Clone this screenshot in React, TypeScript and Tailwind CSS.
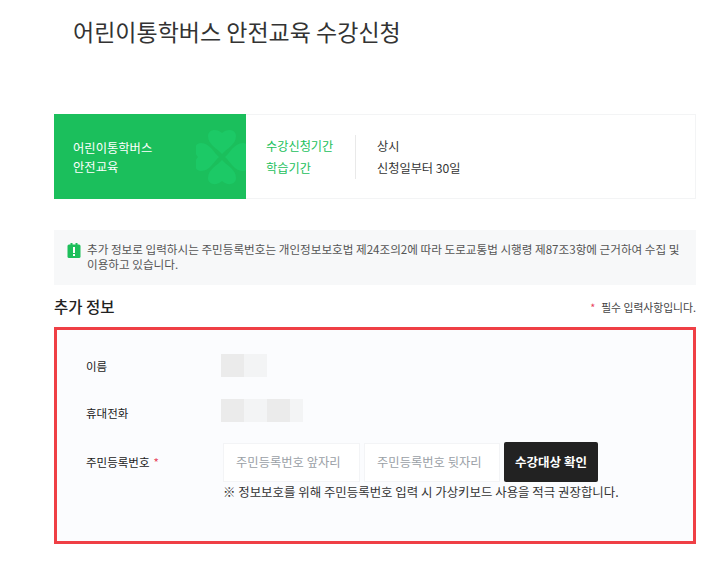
const font = "font-['Noto_Sans_CJK_KR','Noto_Sans',sans-serif]";

function Clover() {
  const heart = 'M0 0 C-4 -5 -14 -9 -14 -18 C-14 -25 -5 -26 0 -21 C5 -26 14 -25 14 -18 C14 -9 4 -5 0 0 Z';
  return (
    <svg width="54" height="60" viewBox="-26 -30 54 60" className="shrink-0 -mr-[4px]" fill="#1cc966">
      <path d={heart} transform="translate(0 -3)" />
      <path d={heart} transform="translate(0 3) rotate(180)" />
      <path d={heart} transform="translate(-3 0) rotate(-90)" />
      <path d={heart} transform="translate(3 0) rotate(90)" />
    </svg>
  );
}

function Notice() {
  return (
    <svg width="14" height="16" viewBox="0 0 14 16" className="shrink-0 mt-[1px]">
      <rect x="0.5" y="1.5" width="13" height="13.5" rx="1.5" fill="#1dbf5b" />
      <rect x="3.5" y="0" width="2" height="3" fill="#1dbf5b" />
      <rect x="8.5" y="0" width="2" height="3" fill="#1dbf5b" />
      <rect x="6" y="4" width="2" height="6" fill="#fff" />
      <rect x="6" y="11" width="2" height="2" fill="#fff" />
    </svg>
  );
}

function Blur({ w, dark }: { w: string; dark?: boolean }) {
  return <div className={`h-[23px] ${w} ${dark ? 'bg-[#ebebeb]' : 'bg-[#f3f4f5]'}`} />;
}

export default function App() {
  return (
    <div className={`w-[720px] h-[564px] overflow-hidden bg-white text-[#222] ${font}`}>
      <h1 className="pl-[73px] pt-[16px] text-[23px] leading-[30px] font-normal text-[#333]">어린이통학버스 안전교육 수강신청</h1>

      <div className="ml-[54px] mr-[24px] mt-[68px] h-[85px] flex border border-[#f3f4f5]">
        <div className="w-[192px] -my-px -ml-px bg-[#1bbf5c] flex items-center justify-between overflow-hidden pl-[19px] text-white text-[12.3px] leading-[19px]">
          <div className="pt-[2px]">어린이통학버스<br />안전교육</div>
          <Clover />
        </div>
        <div className="flex items-center pl-[20px] text-[12.2px] leading-[22px]">
          <div className="text-[#1bbf5c] w-[90px] border-r border-[#e9e9e9]">
            <div>수강신청기간</div>
            <div>학습기간</div>
          </div>
          <div className="pl-[21px] text-[#333]">
            <div>상시</div>
            <div>신청일부터 30일</div>
          </div>
        </div>
      </div>

      <div className="ml-[54px] mr-[24px] mt-[31px] h-[55px] bg-[#f7f8f9] flex gap-[6px] pl-[13px] pr-[10px] pt-[12px] text-[11.6px] leading-[15px] text-[#555]">
        <Notice />
        <p>추가 정보로 입력하시는 주민등록번호는 개인정보보호법 제24조의2에 따라 도로교통법 시행령 제87조3항에 근거하여 수집 및 이용하고 있습니다.</p>
      </div>

      <div className="ml-[54px] mr-[24px] mt-[7px] h-[30px] flex items-center justify-between">
        <h2 className="text-[15.5px] font-medium text-[#222]">추가 정보</h2>
        <p className="text-[10.8px] text-[#444]"><span className="text-[#e8425a] mr-[6px]">*</span>필수 입력사항입니다.</p>
      </div>

      <div className="ml-[54px] mr-[24px] mt-[5px] h-[217px] border-[3px] border-[#ef3f45] bg-[#fbfcfe] pl-[29px] pt-[23px] text-[11.5px] text-[#222]">
        <div className="flex items-center h-[23px] pt-px">
          <div className="w-[135px] pt-[3px]">이름</div>
          <Blur w="w-[23px]" dark />
          <Blur w="w-[23px]" />
        </div>
        <div className="flex items-center h-[23px] mt-[23px]">
          <div className="w-[135px] pt-[7px]">휴대전화</div>
          <Blur w="w-[23px]" dark />
          <Blur w="w-[23px]" />
          <Blur w="w-[23px]" dark />
          <Blur w="w-[13px]" />
        </div>
        <div className="flex items-start mt-[21px]">
          <div className="w-[137px] h-[39px] flex items-center">
            주민등록번호<span className="text-[#e8425a] ml-[4px]">*</span>
          </div>
          <div>
            <div className="flex gap-[4px]">
              <div className="w-[137px] h-[39px] bg-white border border-[#f3f4f6] flex items-center pl-[12px] text-[12.3px] text-[#9aa0a6]">주민등록번호 앞자리</div>
              <div className="w-[136px] h-[39px] bg-white border border-[#f3f4f6] flex items-center pl-[12px] text-[12.3px] text-[#9aa0a6]">주민등록번호 뒷자리</div>
              <button className="w-[94px] h-[40px] -mt-px bg-[#222] rounded-[2px] text-white text-[12.5px] font-bold">수강대상 확인</button>
            </div>
            <p className="text-[12.45px] leading-[16px] mt-[2px] text-[#333]">※ 정보보호를 위해 주민등록번호 입력 시 가상키보드 사용을 적극 권장합니다.</p>
          </div>
        </div>
      </div>
    </div>
  );
}
